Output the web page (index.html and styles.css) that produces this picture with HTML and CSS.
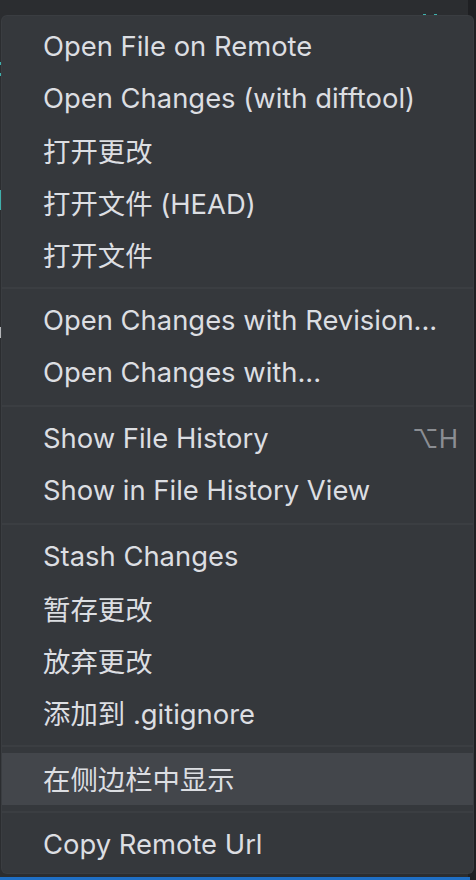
FILE: index.html
```html
<!DOCTYPE html>
<html lang="zh">
<head>
<meta charset="utf-8">
<link rel="stylesheet" href="styles.css">
</head>
<body>
<div class="backdrop">
  <span class="mark mark-top1"></span>
  <span class="mark mark-top2"></span>
  <span class="mark mark-l1"></span>
  <span class="mark mark-l2"></span>
  <span class="mark mark-l3"></span>
  <span class="mark mark-l4"></span>
  <span class="side-col"></span>
  <span class="status-line"></span>
</div>
<div class="menu">
  <div class="item">Open File on Remote</div>
  <div class="item">Open Changes (with difftool)</div>
  <div class="item">打开更改</div>
  <div class="item">打开文件 (HEAD)</div>
  <div class="item">打开文件</div>
  <div class="sep"></div>
  <div class="item">Open Changes with Revision...</div>
  <div class="item">Open Changes with...</div>
  <div class="sep"></div>
  <div class="item"><span>Show File History</span><span class="key">⌥H</span></div>
  <div class="item">Show in File History View</div>
  <div class="sep"></div>
  <div class="item">Stash Changes</div>
  <div class="item">暂存更改</div>
  <div class="item">放弃更改</div>
  <div class="item">添加到 .gitignore</div>
  <div class="sep"></div>
  <div class="item active">在侧边栏中显示</div>
  <div class="sep"></div>
  <div class="item">Copy Remote Url</div>
</div>
</body>
</html>
```
FILE: styles.css
```css
html, body {
  margin: 0;
  padding: 0;
}
body {
  width: 476px;
  height: 880px;
  overflow: hidden;
  background: #2b2d30;
  font-family: Inter, "Noto Sans CJK SC", sans-serif;
  position: relative;
  padding: 16px 0 0 2px;
  box-sizing: border-box;
}
.backdrop {
  position: absolute;
  inset: 0;
}
.mark {
  position: absolute;
  background: #3fb0ac;
}
.mark-top1 { left: 423px; top: 14px; width: 3px; height: 3px; }
.mark-top2 { left: 434px; top: 14px; width: 3px; height: 3px; }
.mark-l1 { left: 0; top: 62px; width: 2px; height: 3px; }
.mark-l2 { left: 0; top: 73px; width: 2px; height: 3px; }
.mark-l3 { left: 0; top: 190px; width: 2px; height: 20px; }
.mark-l4 { left: 0; top: 327px; width: 2px; height: 11px; background: #b5b7ba; }
.side-col {
  position: absolute;
  left: 468px;
  top: 0;
  width: 8px;
  height: 880px;
  background: #1f2023;
}
.status-line {
  position: absolute;
  left: 0;
  top: 877px;
  width: 470px;
  height: 3px;
  background: #1f6fc5;
}
.menu {
  position: relative;
  width: 471px;
  box-sizing: border-box;
  background: #35383c;
  border-radius: 5px;
  padding: 5px 0 2px;
  box-shadow: 0 0 0 1px #3a3d41;
}
.item {
  height: 52px;
  box-sizing: border-box;
  display: flex;
  align-items: center;
  justify-content: space-between;
  padding: 0 15px 2px 41px;
  color: #dcdee2;
  font-size: 27.4px;
  white-space: nowrap;
}
.item.active {
  background: #43464b;
}
.key {
  color: #8b8e93;
  font-size: 26px;
}
.sep {
  height: 14px;
  display: flex;
  align-items: center;
}
.sep::before {
  content: "";
  flex: 1;
  height: 2px;
  background: #3b3e42;
}
```
